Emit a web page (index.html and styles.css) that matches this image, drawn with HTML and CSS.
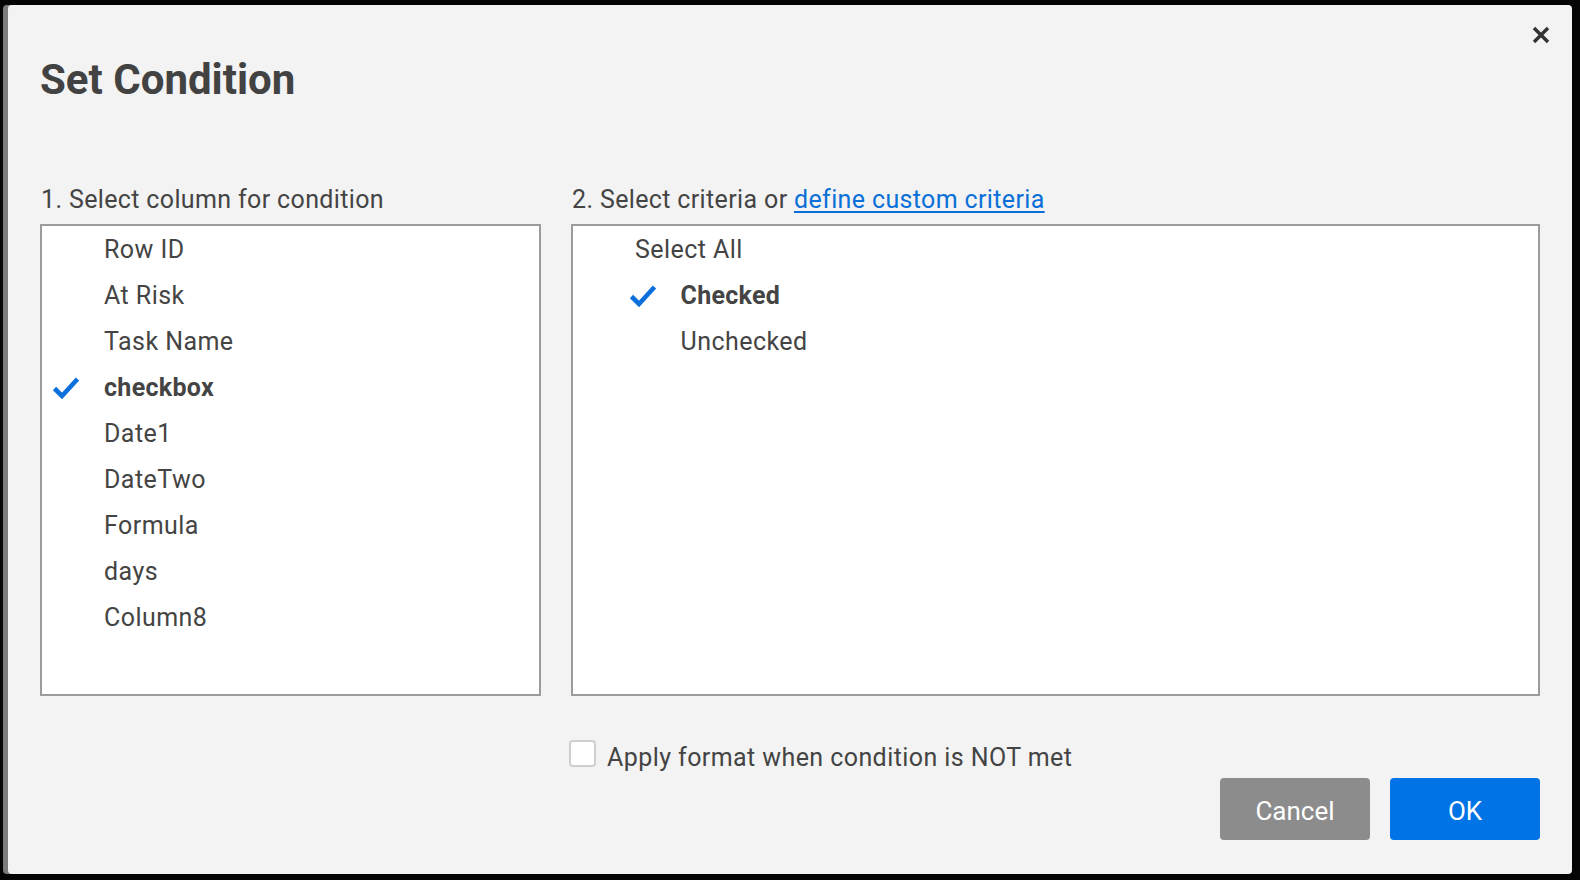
FILE: index.html
```html
<!DOCTYPE html>
<html lang="en">
<head>
<meta charset="utf-8">
<title>Set Condition</title>
<link rel="stylesheet" href="styles.css">
</head>
<body>
<div class="backdrop">
  <div class="dialog">
    <button class="close" aria-label="Close">
      <svg viewBox="0 0 18 18" width="18" height="18"><path d="M2 2 L16 16 M16 2 L2 16" stroke="#333" stroke-width="3.4" fill="none"/></svg>
    </button>
    <h1 class="title">Set Condition</h1>
    <div class="columns">
      <div class="col">
        <div class="label">1. Select column for condition</div>
        <div class="listbox">
          <div class="row"><span class="slot"></span><span>Row ID</span></div>
          <div class="row"><span class="slot"></span><span>At Risk</span></div>
          <div class="row"><span class="slot"></span><span>Task Name</span></div>
          <div class="row selected"><span class="slot"><svg class="check" viewBox="0 0 28 24" width="28" height="24"><path d="M2.5 12.5 L10 20 L25.5 3" stroke="#0b6fdc" stroke-width="4.6" fill="none"/></svg></span><span>checkbox</span></div>
          <div class="row"><span class="slot"></span><span>Date1</span></div>
          <div class="row"><span class="slot"></span><span>DateTwo</span></div>
          <div class="row"><span class="slot"></span><span>Formula</span></div>
          <div class="row"><span class="slot"></span><span>days</span></div>
          <div class="row"><span class="slot"></span><span>Column8</span></div>
        </div>
      </div>
      <div class="col">
        <div class="label">2. Select criteria or <a class="link" href="#">define custom criteria</a></div>
        <div class="listbox">
          <div class="row"><span class="slot"></span><span>Select All</span></div>
          <div class="row sub selected"><span class="slot"><svg class="check" viewBox="0 0 28 24" width="28" height="24"><path d="M2.5 12.5 L10 20 L25.5 3" stroke="#0b6fdc" stroke-width="4.6" fill="none"/></svg></span><span>Checked</span></div>
          <div class="row sub"><span class="slot"></span><span>Unchecked</span></div>
        </div>
      </div>
    </div>
    <div class="footer">
      <label class="option"><span class="box"></span><span class="option-text">Apply format when condition is NOT met</span></label>
      <div class="buttons">
        <button class="btn cancel">Cancel</button>
        <button class="btn ok">OK</button>
      </div>
    </div>
  </div>
</div>
</body>
</html>
```
FILE: styles.css
```css
html, body {
  margin: 0;
  padding: 0;
  background: #050505;
}
body {
  font-family: Roboto, "Liberation Sans", Arial, sans-serif;
  color: #444;
}
.backdrop {
  padding: 5px 8px 6px 8px;
  width: 1564px;
  height: 869px;
}
.dialog {
  position: relative;
  box-sizing: border-box;
  width: 1564px;
  height: 869px;
  background: #f3f3f3;
  border-radius: 4px;
  padding: 49px 32px 34px 32px;
  box-shadow: -5px 0 0 #7c7c7c;
  display: flex;
  flex-direction: column;
}
.close {
  position: absolute;
  top: 21px;
  right: 22px;
  width: 18px;
  height: 18px;
  padding: 0;
  border: 0;
  background: none;
  display: flex;
}
.title {
  margin: 0;
  font-size: 42px;
  line-height: 52px;
  font-weight: 700;
  color: #424242;
}
.columns {
  margin-top: 79px;
  display: grid;
  grid-template-columns: 501px 1fr;
  column-gap: 30px;
}
.label {
  font-size: 25px;
  letter-spacing: 0.36px;
  line-height: 30px;
  margin-bottom: 9px;
  padding-left: 1px;
}
.link {
  color: #0a6fd8;
  text-decoration: underline;
  text-underline-offset: 3px;
  text-decoration-thickness: 2px;
}
.listbox {
  box-sizing: border-box;
  height: 472px;
  background: #fff;
  border: 2px solid #9c9c9c;
  padding-top: 1px;
}
.row {
  display: flex;
  align-items: center;
  height: 45.9px;
  font-size: 25px;
  letter-spacing: 0.45px;
  padding-left: 10px;
}
.row.sub {
  padding-left: 55.5px;
}
.row.selected {
  font-weight: 700;
  letter-spacing: 0.3px;
}
.slot {
  width: 52px;
  flex: none;
  display: flex;
  align-items: center;
}
.check {
  display: block;
}
.footer {
  display: flex;
  flex-direction: column;
  margin-top: 44px;
}
.option {
  margin-left: 529px;
  height: 27px;
  display: flex;
  align-items: flex-start;
  gap: 11px;
  font-size: 25px;
  letter-spacing: 0.42px;
  line-height: 27px;
}
.option-text {
  padding-top: 4px;
}
.box {
  box-sizing: border-box;
  width: 27px;
  height: 27px;
  border: 2px solid #cfcfcf;
  border-radius: 4px;
  background: #fff;
  flex: none;
}
.buttons {
  margin-top: 11px;
  display: flex;
  justify-content: flex-end;
  gap: 20px;
}
.btn {
  width: 150px;
  height: 62px;
  border: 0;
  border-radius: 4px;
  color: #fff;
  font-family: Roboto, "Liberation Sans", Arial, sans-serif;
  font-size: 26px;
  padding: 3px 0 0 0;
}
.cancel {
  background: #8c8c8c;
}
.ok {
  background: #0073e6;
}
```
